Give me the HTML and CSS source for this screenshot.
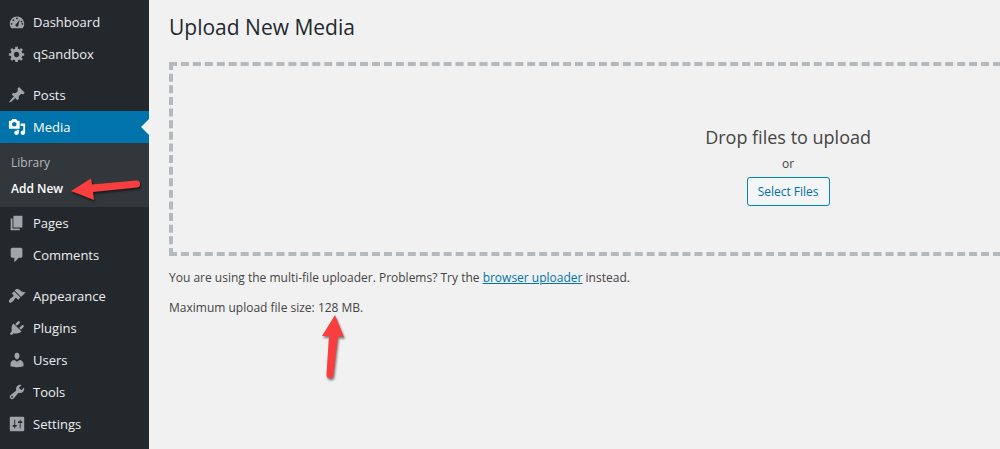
FILE: index.html
```
<!DOCTYPE html>
<html lang="en">

<head>
    <meta charset="UTF-8">
    <title>Upload New Media</title>
    <link rel="stylesheet" href="styles.css">
</head>

<body>
    <div class="admin">
        <nav class="sidebar">
            <ul class="menu">
                <li>
                    <a href="#" class="menu-link">
                        <svg class="icon" viewBox="0 0 20 20"><path fill-rule="evenodd" d="M3.76 17h12.48c1.34-1.63 1.76-3.64 1.76-5 0-4.42-3.58-8-8-8s-8 3.58-8 8c0 1.36.41 3.37 1.76 5zM9 6a1 1 0 1 0 2 0a1 1 0 1 0-2 0zM5 8a1 1 0 1 0 2 0a1 1 0 1 0-2 0zM3 12a1 1 0 1 0 2 0a1 1 0 1 0-2 0zM15 12a1 1 0 1 0 2 0a1 1 0 1 0-2 0zM14 9.5a1 1 0 1 0 2 0a1 1 0 1 0-2 0zM13.4 6.6L11.6 12.9c.5 1.1-.3 2.4-1.6 2.4s-2.2-1.4-1.6-2.5c.3-.6.8-.9 1.3-1z"/></svg>
                        <span>Dashboard</span>
                    </a>
                </li>
                <li>
                    <a href="#" class="menu-link">
                        <svg class="icon" viewBox="0 0 20 20"><path d="M18 12h-2.18c-.17.7-.44 1.35-.81 1.93l1.54 1.54-2.1 2.1-1.54-1.54c-.58.36-1.23.63-1.91.79V19H8v-2.18c-.68-.16-1.33-.43-1.91-.79l-1.54 1.54-2.12-2.12 1.54-1.54c-.36-.58-.63-1.23-.79-1.91H1V9.03h2.17c.16-.7.44-1.35.8-1.94L2.43 5.55l2.1-2.1 1.54 1.54c.58-.37 1.24-.64 1.93-.81V2h3v2.18c.68.16 1.33.43 1.91.79l1.54-1.54 2.12 2.12-1.54 1.54c.36.59.64 1.24.8 1.94H18V12zm-8.5 1.5c1.66 0 3-1.34 3-3s-1.34-3-3-3-3 1.34-3 3 1.34 3 3 3z"/></svg>
                        <span>qSandbox</span>
                    </a>
                </li>
                <li class="group-start">
                    <a href="#" class="menu-link">
                        <svg class="icon" viewBox="0 0 20 20"><path d="M10.44 3.02l1.82-1.82 6.36 6.35-1.83 1.82c-1.05-.68-2.48-.57-3.41.36l-.75.75c-.92.93-1.04 2.35-.35 3.41l-1.83 1.82-2.41-2.41-2.8 2.79c-.42.42-3.38 2.71-3.8 2.29s1.86-3.39 2.28-3.81l2.79-2.79L4.1 9.36l1.83-1.82c1.05.69 2.48.57 3.4-.36l.75-.75c.93-.92 1.05-2.35.36-3.41z"/></svg>
                        <span>Posts</span>
                    </a>
                </li>
                <li>
                    <a href="#" class="menu-link current">
                        <svg class="icon" viewBox="0 0 20 20"><path d="M13 11V4c0-.55-.45-1-1-1h-1.67L9 1H5L3.67 3H2c-.55 0-1 .45-1 1v7c0 .55.45 1 1 1h10c.55 0 1-.45 1-1zM7 4.5c1.38 0 2.5 1.12 2.5 2.5S8.38 9.5 7 9.5 4.5 8.38 4.5 7 5.62 4.5 7 4.5zM14 6h5v10.5c0 1.38-1.12 2.5-2.5 2.5S14 17.88 14 16.5s1.12-2.5 2.5-2.5c.17 0 .34.02.5.05V9h-3V6zm-4 8.05V13h2v3.5c0 1.38-1.12 2.5-2.5 2.5S7 17.88 7 16.5 8.12 14 9.5 14c.17 0 .34.02.5.05z"/></svg>
                        <span>Media</span>
                    </a>
                    <ul class="submenu">
                        <li><a href="#" class="submenu-link">Library</a></li>
                        <li>
                            <a href="#" class="submenu-link active">Add New</a>
                            <svg class="arrow arrow-left" viewBox="0 0 76 32"><path d="M4 18L24 5.500L25 11.500L69 7.500A3.500 3.500 0 0 1 70 14.500L26 19L27 27z"/></svg>
                        </li>
                    </ul>
                </li>
                <li>
                    <a href="#" class="menu-link">
                        <svg class="icon" viewBox="0 0 20 20"><path d="M6 15V2h10v13H6zm-1 1h8v2H3V5h2v11z"/></svg>
                        <span>Pages</span>
                    </a>
                </li>
                <li>
                    <a href="#" class="menu-link">
                        <svg class="icon" viewBox="0 0 20 20"><path d="M5 2h9c1.1 0 2 .9 2 2v7c0 1.100-.9 2-2 2h-2l-5 5v-5H5c-1.100 0-2-.9-2-2V4c0-1.100.9-2 2-2z"/></svg>
                        <span>Comments</span>
                    </a>
                </li>
                <li class="group-start">
                    <a href="#" class="menu-link">
                        <svg class="icon" viewBox="0 0 20 20"><path d="M14.48 11.06L7.41 3.99l1.5-1.5c.5-.56 2.3-.47 3.51.32 1.21.8 1.43 1.28 2.91 2.1 1.18.64 2.45 1.26 4.45.85zm-.71.71L6.7 4.7 4.93 6.47c-.39.39-.39 1.02 0 1.41l1.06 1.06c.39.39.39 1.03 0 1.42-.6.6-1.43 1.11-2.21 1.69-.35.26-.7.53-1.01.84C1.43 14.23.4 16.08 1.4 17.07c.99 1 2.84-.03 4.18-1.36.31-.31.58-.66.85-1.02.57-.78 1.08-1.61 1.69-2.21.39-.39 1.02-.39 1.41 0l1.06 1.06c.39.39 1.02.39 1.41 0z"/></svg>
                        <span>Appearance</span>
                    </a>
                </li>
                <li>
                    <a href="#" class="menu-link">
                        <svg class="icon" viewBox="0 0 20 20"><path d="M13.11 4.36L9.87 7.6 8 5.73l3.24-3.24c.35-.34 1.05-.2 1.56.32.52.51.66 1.21.31 1.55zm-8 1.77l.91-1.12 9.01 9.01-1.19.84c-.71.71-2.63 1.16-3.82 1.16H6.14L4.9 17.26c-.59.59-1.54.59-2.12 0-.59-.58-.59-1.53 0-2.12l1.24-1.24v-3.88c0-1.13.4-3.19 1.09-3.89zm7.26 3.97l3.24-3.24c.34-.35 1.04-.21 1.55.31.52.51.66 1.21.31 1.55l-3.24 3.25z"/></svg>
                        <span>Plugins</span>
                    </a>
                </li>
                <li>
                    <a href="#" class="menu-link">
                        <svg class="icon" viewBox="0 0 20 20"><path d="M10 9.25c-2.27 0-2.73-3.44-2.73-3.44C7 4.02 7.82 2 9.97 2c2.16 0 2.98 2.02 2.71 3.81 0 0-.41 3.44-2.68 3.44zm0 2.57L12.72 10c2.39 0 4.52 2.33 4.52 4.53v2.49s-3.65 1.13-7.24 1.13c-3.65 0-7.24-1.13-7.24-1.13v-2.49c0-2.25 1.94-4.48 4.47-4.48z"/></svg>
                        <span>Users</span>
                    </a>
                </li>
                <li>
                    <a href="#" class="menu-link">
                        <svg class="icon" viewBox="0 0 20 20"><path d="M16.68 9.77c-1.34 1.34-3.3 1.67-4.95.99l-5.41 6.52c-.99.99-2.59.99-3.58 0s-.99-2.59 0-3.57l6.52-5.42c-.68-1.65-.35-3.61.99-4.95 1.28-1.28 3.12-1.62 4.72-1.06l-2.89 2.89 2.82 2.82 2.86-2.87c.53 1.58.18 3.39-1.08 4.65zM3.81 16.21c.4.39 1.04.39 1.43 0 .4-.4.4-1.04 0-1.43-.39-.4-1.03-.4-1.43 0-.39.39-.39 1.03 0 1.43z"/></svg>
                        <span>Tools</span>
                    </a>
                </li>
                <li>
                    <a href="#" class="menu-link">
                        <svg class="icon" viewBox="0 0 20 20"><path fill-rule="evenodd" d="M18 17V3c0-.55-.45-1-1-1H3c-.55 0-1 .45-1 1v14c0 .55.45 1 1 1h14c.55 0 1-.45 1-1zM8 11h1c.55 0 1 .45 1 1s-.45 1-1 1H8v1.5c0 .28-.22.5-.5.5s-.5-.22-.5-.5V13H6c-.55 0-1-.45-1-1s.45-1 1-1h1V5.500c0-.28.22-.5.5-.5s.5.22.5.5V11zm5-2h-1c-.55 0-1-.45-1-1s.45-1 1-1h1V5.500c0-.28.22-.5.5-.5s.5.22.5.5V7h1c.55 0 1 .45 1 1s-.45 1-1 1h-1v5.500c0 .28-.22.5-.5.5s-.5-.22-.5-.5V9z"/></svg>
                        <span>Settings</span>
                    </a>
                </li>
            </ul>
        </nav>
        <main class="content">
            <h1>Upload New Media</h1>
            <div class="drop-area">
                <p class="drop-title">Drop files to upload</p>
                <p class="drop-or">or</p>
                <button type="button" class="button">Select Files</button>
            </div>
            <p class="note">You are using the multi-file uploader. Problems? Try the <a href="#">browser uploader</a> instead.</p>
            <p class="note">Maximum upload file size: <span class="limit">128 MB.<svg class="arrow arrow-up" viewBox="0 0 32 72"><path d="M17 4L26 26L20 25.500L15.500 64A3.500 3.500 0 0 1 8.500 63.500L11 25L4 25z"/></svg></span></p>
        </main>
    </div>
</body>

</html>
```
FILE: styles.css
```
* {
    box-sizing: border-box;
}

body {
    margin: 0;
    background: #f1f1f1;
    color: #444;
    font-family: "Open Sans", "Noto Sans", sans-serif;
    font-size: 12px;
    line-height: 18px;
}

p,
h1,
ul {
    margin: 0;
    padding: 0;
}

ul {
    list-style: none;
}

.admin {
    display: flex;
    min-height: 100vh;
}

/* sidebar */
.sidebar {
    flex: 0 0 149px;
    background: #23282d;
}

.menu {
    padding-top: 6px;
}

.menu-link {
    display: flex;
    align-items: center;
    gap: 7px;
    height: 32px;
    padding-left: 8px;
    color: #eee;
    font-size: 13px;
    text-decoration: none;
}

.group-start {
    margin-top: 9px;
}

.icon {
    width: 18px;
    height: 18px;
    fill: #a0a5aa;
}

.current {
    position: relative;
    background: #0073aa;
    color: #fff;
}

.current .icon {
    fill: #fff;
}

.current::after {
    content: "";
    position: absolute;
    right: 0;
    top: 8px;
    border: 8px solid transparent;
    border-left-width: 0;
    border-right-color: #f1f1f1;
}

.submenu {
    padding: 7px 0 5px;
    background: #32373c;
}

.submenu li {
    position: relative;
}

.submenu-link {
    display: block;
    padding: 4px 11px;
    color: #b4b9be;
    text-decoration: none;
}

.submenu-link.active {
    color: #fff;
    font-weight: 600;
}

/* content */
.content {
    flex: 1;
    min-width: 0;
    padding: 13px 0 0 20px;
    overflow: hidden;
}

h1 {
    color: #23282d;
    font-size: 21px;
    font-weight: 400;
    line-height: 28px;
}

/* wider than the window, so the right side runs off screen */
.drop-area {
    display: flex;
    flex-direction: column;
    align-items: center;
    width: 149%;
    margin: 21px 0 13px;
    padding: 57px 0 46px;
    border: 4px dashed #b4b9be;
}

.drop-title {
    font-size: 18px;
    line-height: 28px;
}

.drop-or {
    padding: 4px 0;
}

.button {
    height: 29px;
    padding: 0 10px;
    border: 1px solid #0085ba;
    border-radius: 3px;
    background: #f3f5f6;
    color: #0071a1;
    font: inherit;
}

.note {
    margin-bottom: 12px;
}

.note a {
    color: #0073aa;
}

.limit {
    position: relative;
}

/* red pointers */
.arrow {
    position: absolute;
    fill: #f93e40;
    filter: drop-shadow(1px 2px 1px rgba(0, 0, 0, 0.5));
}

.arrow-left {
    left: 67px;
    top: -3px;
    width: 76px;
    height: 32px;
}

.arrow-up {
    left: 0;
    top: 12px;
    width: 32px;
    height: 72px;
}
```
